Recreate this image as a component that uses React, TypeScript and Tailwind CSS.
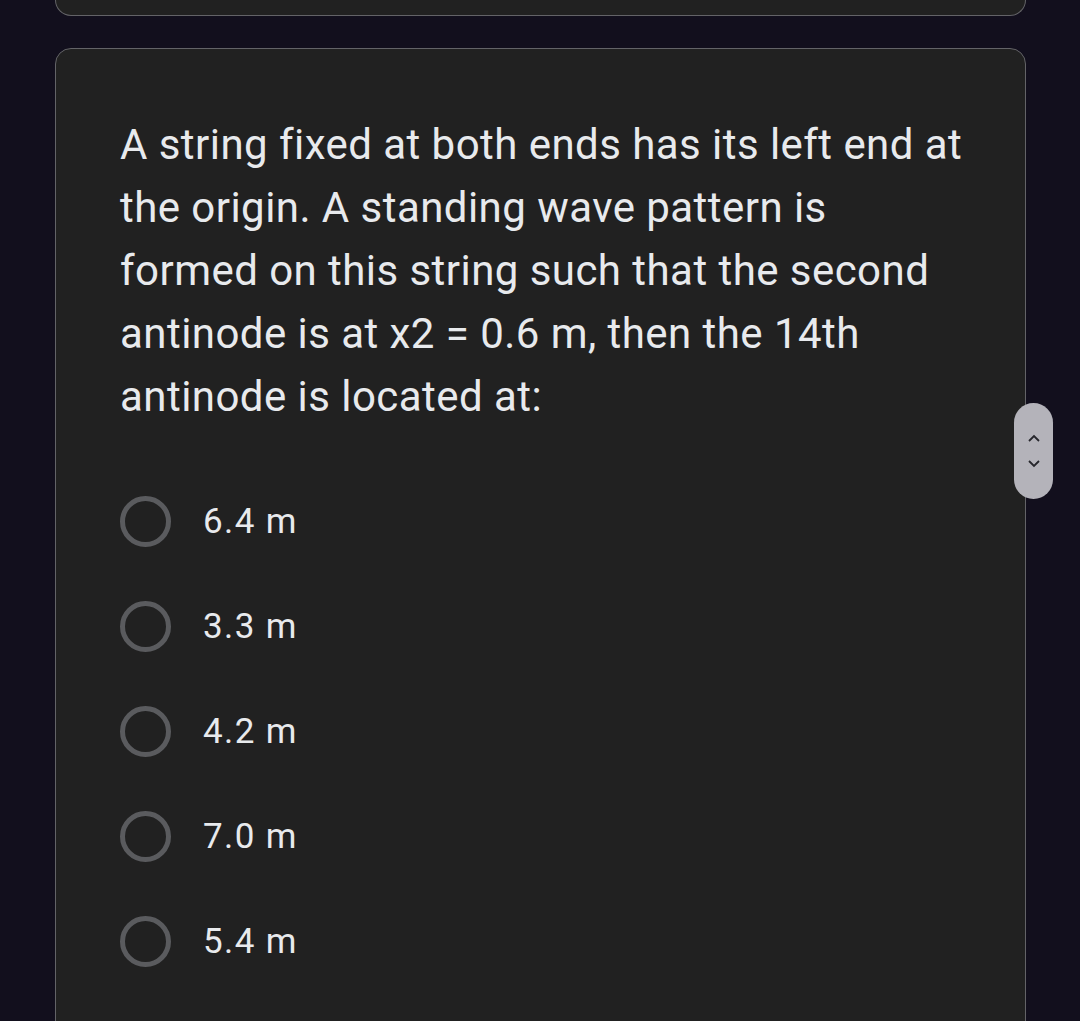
import React from "react";

const lines = [
  "A string fixed at both ends has its left end at",
  "the origin. A standing wave pattern is",
  "formed on this string such that the second",
  "antinode is at x2 = 0.6 m, then the 14th",
  "antinode is located at:",
];

const options = ["6.4 m", "3.3 m", "4.2 m", "7.0 m", "5.4 m"];

export default function App() {
  return (
    <div className="relative h-[1021px] w-[1080px] overflow-hidden bg-[#120f1d]">
      <div className="pl-[55px]">
        <div className="h-[16px] w-[971px] rounded-b-[16px] border-x border-b border-[#636367] bg-[#212121]" />
        <div className="mt-[32px] h-[1100px] w-[971px] rounded-[16px] border border-[#636367] bg-[#212121] pl-[64px] pt-[64px]">
          <div
            className="text-[42px] leading-[63px] tracking-[0.45px] text-[#e8eaed]"
            style={{ fontFamily: "Roboto, sans-serif" }}
          >
            {lines.map((l) => (
              <div key={l} className="whitespace-nowrap">
                {l}
              </div>
            ))}
          </div>
          <div className="mt-[68px] flex flex-col gap-[54px]">
            {options.map((o) => (
              <div key={o} className="flex h-[51px] items-center">
                <div className="h-[51px] w-[51px] shrink-0 rounded-full border-[5px] border-[#5a5b5e]" />
                <div
                  className="ml-[32px] text-[35px] leading-[51px] tracking-[1.4px] text-[#e8eaed]"
                  style={{ fontFamily: "Roboto, sans-serif" }}
                >
                  {o}
                </div>
              </div>
            ))}
          </div>
        </div>
      </div>
      <div className="absolute left-[1014px] top-[403px] flex h-[96px] w-[39px] flex-col items-center justify-center gap-[16px] rounded-full bg-[#b4b3ba]">
        <svg width="14" height="9" viewBox="0 0 14 9" fill="none">
          <path d="M2 7 L7 2 L12 7" stroke="#26262c" strokeWidth="1.8" />
        </svg>
        <svg width="14" height="9" viewBox="0 0 14 9" fill="none">
          <path d="M2 2 L7 7 L12 2" stroke="#26262c" strokeWidth="1.8" />
        </svg>
      </div>
    </div>
  );
}
